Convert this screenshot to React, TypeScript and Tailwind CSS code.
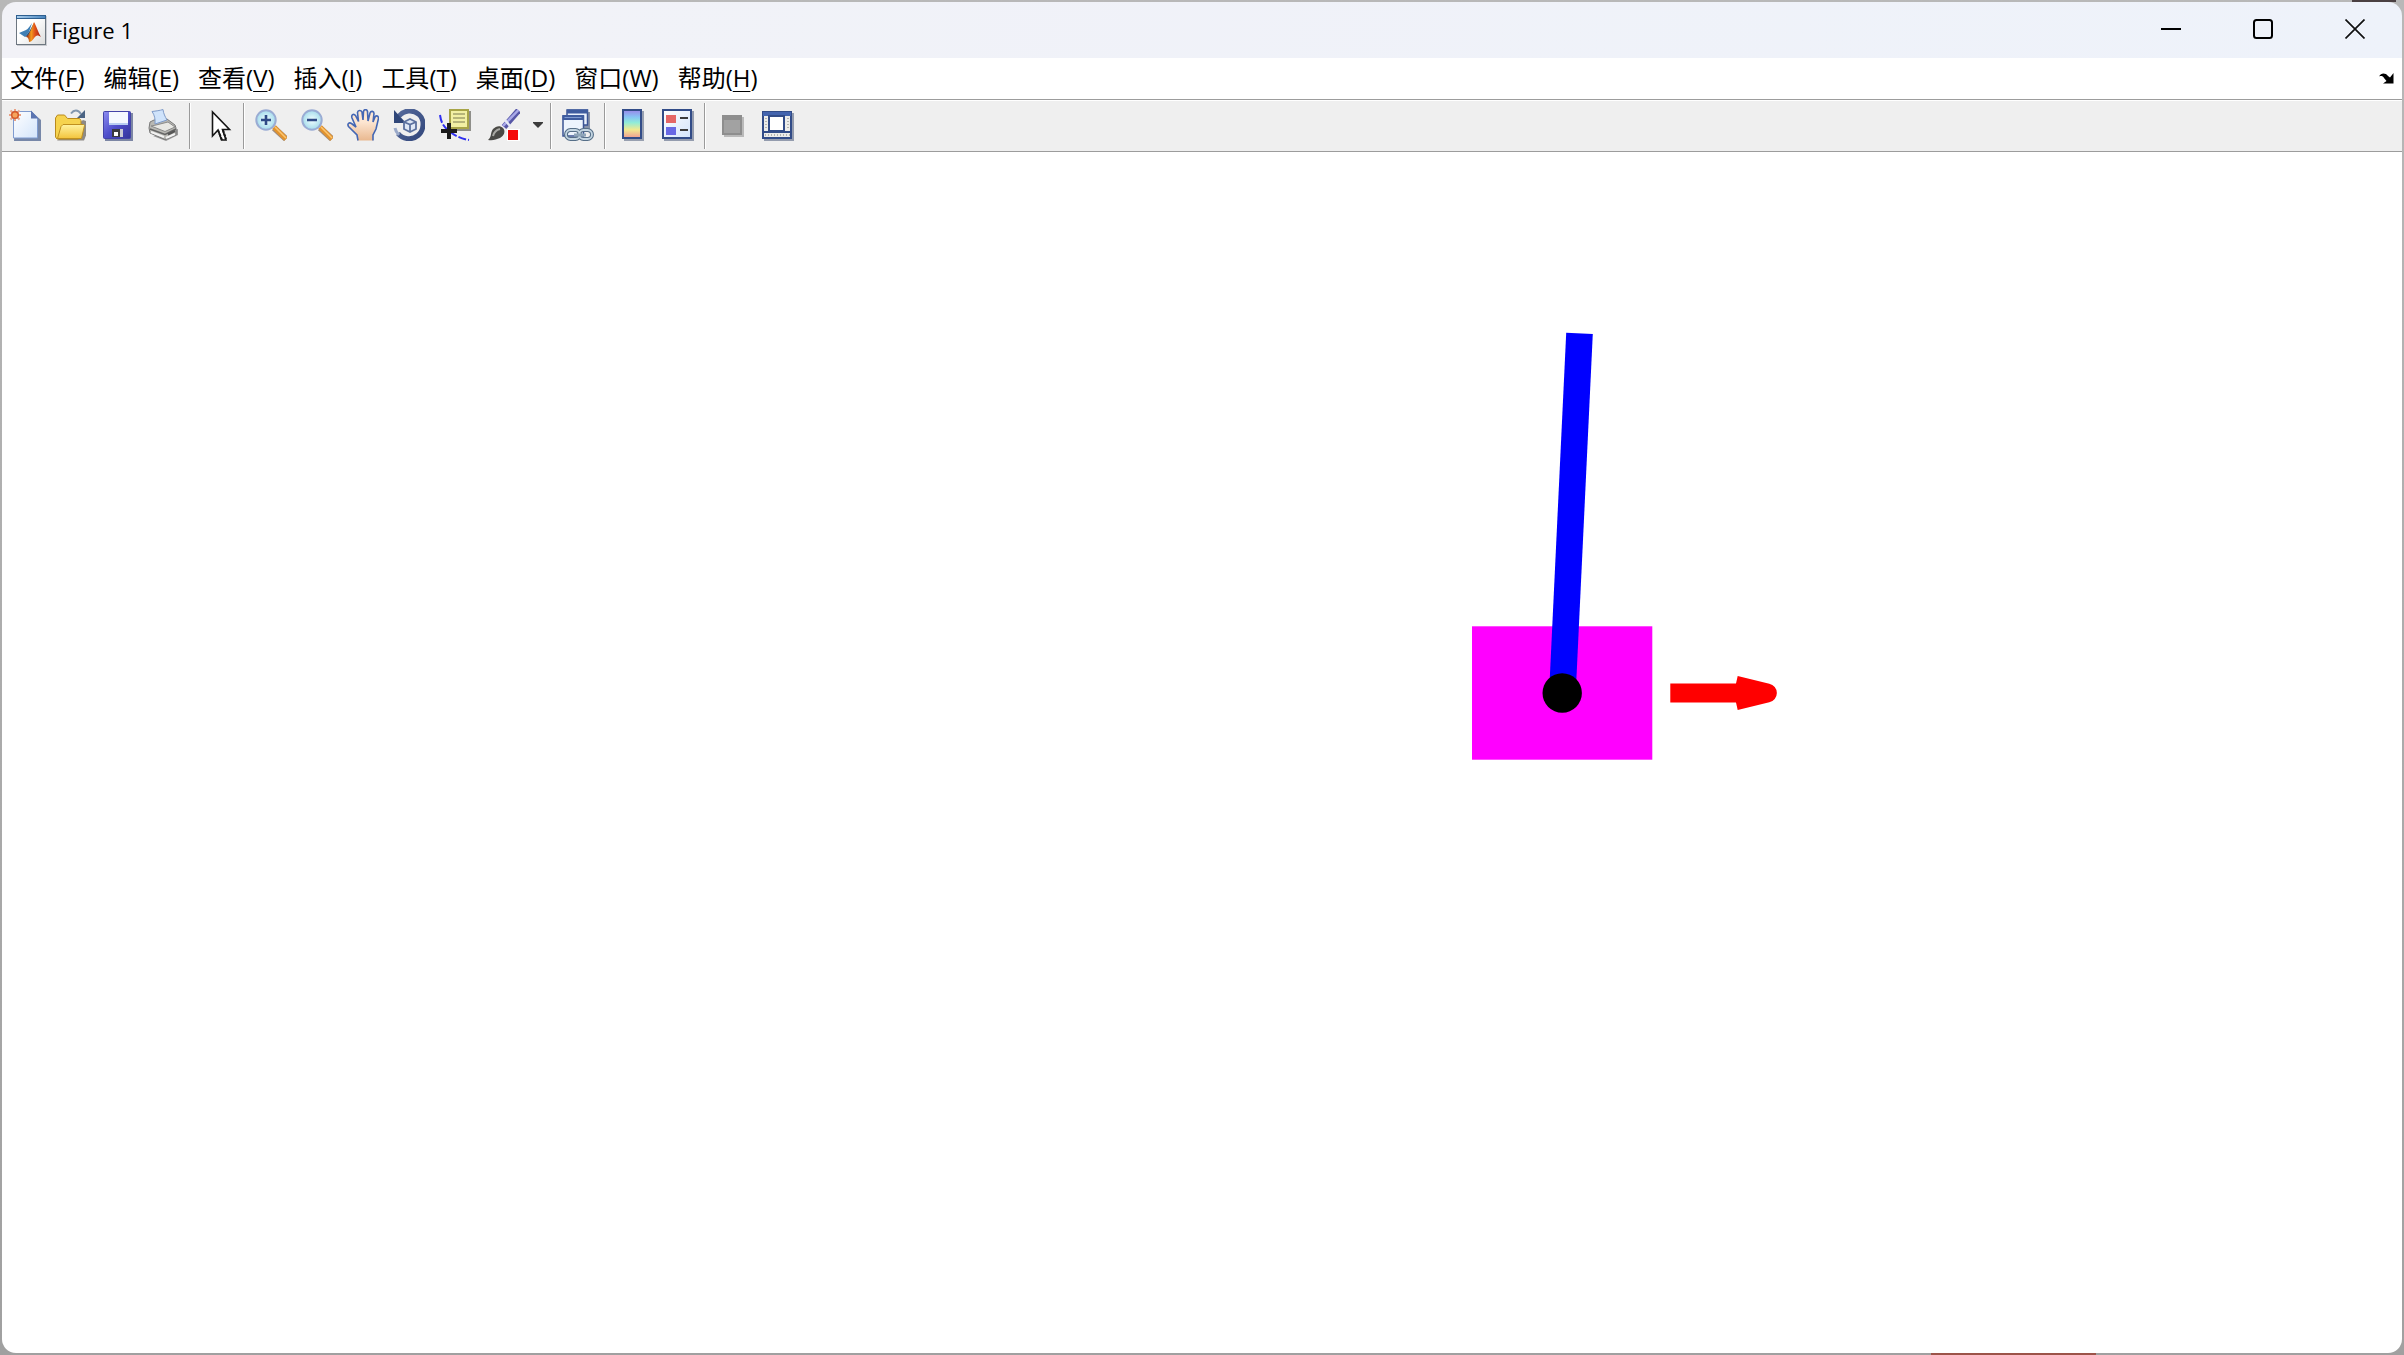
import type { ReactNode } from 'react'

const menus = [
  { label: '文件', hotkey: 'F' },
  { label: '编辑', hotkey: 'E' },
  { label: '查看', hotkey: 'V' },
  { label: '插入', hotkey: 'I' },
  { label: '工具', hotkey: 'T' },
  { label: '桌面', hotkey: 'D' },
  { label: '窗口', hotkey: 'W' },
  { label: '帮助', hotkey: 'H' },
]

function Icon({ children }: { children: ReactNode }) {
  return (
    <svg className="size-8" viewBox="0 0 32 32" fill="none" aria-hidden="true">
      {children}
    </svg>
  )
}

function ToolButton({ label, children }: { label: string; children: ReactNode }) {
  return (
    <button type="button" aria-label={label} className="flex h-full w-[46px] items-center justify-center pb-px">
      <Icon>{children}</Icon>
    </button>
  )
}

function Separator() {
  return <div className="mx-[3px] h-[46px] w-0.5 border-l border-[#9a9a9a] bg-white" />
}

function MatlabLogo() {
  return (
    <svg className="size-[31px]" viewBox="0 0 31 31" aria-hidden="true">
      <defs>
        <linearGradient id="logoBar" x1="0" x2="1">
          <stop offset="0" stopColor="#a9cdec" />
          <stop offset="1" stopColor="#4a86bf" />
        </linearGradient>
        <linearGradient id="logoBg" x1="0" y1="0" x2="1" y2="1">
          <stop offset="0.4" stopColor="#ffffff" />
          <stop offset="1" stopColor="#dcdcdc" />
        </linearGradient>
        <linearGradient id="logoPeak" x1="0" x2="1">
          <stop offset="0" stopColor="#8c1a12" />
          <stop offset="0.35" stopColor="#f39a1e" />
          <stop offset="0.6" stopColor="#e0521c" />
          <stop offset="1" stopColor="#a31f14" />
        </linearGradient>
      </defs>
      <rect x="1" y="1" width="30" height="30" fill="#c9cbd0" />
      <rect x="0.5" y="0.5" width="29" height="29" fill="url(#logoBg)" stroke="#6d7680" />
      <rect x="0" y="0" width="30" height="4" fill="#2f5f8f" />
      <rect x="1" y="1" width="28" height="2" fill="url(#logoBar)" />
      <path d="M3 18l7-3c2-1 4-4 6-7l-3 9-4 5z" fill="#3f7fb5" />
      <path d="M9 22l4-5 5-9c-1 4-2 8-6 13z" fill="#24507c" />
      <path d="M10 22c4-3 5-8 8-15 2 3 4 10 7 15-3-2-4-2-6 0s-3 5-6 5c0-3-1-5-3-5z" fill="url(#logoPeak)" />
    </svg>
  )
}

function TitleBar() {
  return (
    <header className="flex h-14 items-center justify-between bg-gradient-to-r from-[#f2f2f7] to-[#eef2fa]">
      <div className="flex items-center gap-1 pl-3.5">
        <MatlabLogo />
        <h1 className="text-[22px] leading-8">Figure 1</h1>
      </div>
      <div className="flex h-full pr-px pb-0.5">
        <button type="button" aria-label="最小化" className="flex w-[92px] items-center justify-center">
          <svg className="size-5" viewBox="0 0 20 20">
            <path d="M0 10h20" stroke="#000" strokeWidth="2" />
          </svg>
        </button>
        <button type="button" aria-label="最大化" className="flex w-[92px] items-center justify-center">
          <svg className="size-5" viewBox="0 0 20 20">
            <rect x="1" y="1" width="18" height="18" rx="2.5" fill="none" stroke="#000" strokeWidth="2" />
          </svg>
        </button>
        <button type="button" aria-label="关闭" className="flex w-[92px] items-center justify-center">
          <svg className="size-5" viewBox="0 0 20 20">
            <path d="M0.5 0.5l19 19M19.5 0.5l-19 19" stroke="#111" strokeWidth="1.7" />
          </svg>
        </button>
      </div>
    </header>
  )
}

function MenuBar() {
  return (
    <nav className="flex h-[41px] items-center justify-between bg-white px-2">
      <div className="flex gap-[19px] pb-0.5">
        {menus.map((menu) => (
          <button key={menu.hotkey} type="button" className="text-2xl leading-8 whitespace-nowrap">
            {menu.label}(
            <span className="underline decoration-1 underline-offset-4">{menu.hotkey}</span>)
          </button>
        ))}
      </div>
      <button type="button" aria-label="停靠">
        <svg className="h-[11px] w-[15px]" viewBox="0 0 15 11">
          <path d="M0 3.5C2 0 6-0.5 9 3l2 1.5L14.5 0v10.5H4l3.5-2.5L5 5C4 3 2 2.500 0 3.500z" fill="#000" />
        </svg>
      </button>
    </nav>
  )
}

function Toolbar() {
  return (
    <div
      role="toolbar"
      className="flex h-[53px] items-center border-y border-[#9c9c9c] bg-[#efefef] shadow-[inset_0_1px_0_#ffffff]"
    >
      <svg className="absolute size-0" aria-hidden="true">
        <defs>
          <linearGradient id="page" x1="0" y1="0" x2="1" y2="1">
            <stop offset="0" stopColor="#ffffff" />
            <stop offset="1" stopColor="#d3e4fb" />
          </linearGradient>
          <linearGradient id="folder" x1="0" y1="0" x2="0" y2="1">
            <stop offset="0" stopColor="#fff3a0" />
            <stop offset="1" stopColor="#f3c43c" />
          </linearGradient>
          <linearGradient id="disk" x1="0" y1="0" x2="1" y2="1">
            <stop offset="0" stopColor="#8d8df0" />
            <stop offset="0.5" stopColor="#4f4fcb" />
            <stop offset="1" stopColor="#34349a" />
          </linearGradient>
          <radialGradient id="lens">
            <stop offset="0" stopColor="#f2ffff" />
            <stop offset="1" stopColor="#a5dcec" />
          </radialGradient>
          <linearGradient id="skin" x1="0" y1="0" x2="0" y2="1">
            <stop offset="0.4" stopColor="#fde6d2" />
            <stop offset="1" stopColor="#e9b88f" />
          </linearGradient>
          <linearGradient id="spectrum" x1="0" y1="0" x2="0" y2="1">
            <stop offset="0" stopColor="#9a86e8" />
            <stop offset="0.25" stopColor="#86c4f4" />
            <stop offset="0.45" stopColor="#90ecd8" />
            <stop offset="0.7" stopColor="#f1ea90" />
            <stop offset="1" stopColor="#f09a92" />
          </linearGradient>
          <linearGradient id="ring" x1="0" y1="0" x2="1" y2="1">
            <stop offset="0" stopColor="#55699a" />
            <stop offset="1" stopColor="#33487c" />
          </linearGradient>
        </defs>
      </svg>

      <ToolButton label="新建图窗">
        <path d="M6 4h18l8 7v21H5z" fill="#7787a8" />
        <path d="M4.5 2.5h18l6 6v20.5h-24z" fill="url(#page)" stroke="#7f9bd0" />
        <path d="M22 1.5v8h7.5z" fill="#5b74b0" />
        <path d="M6 0v12M0 6h12M1.5 1.5l9 9M10.5 1.5l-9 9" stroke="#e9a184" strokeWidth="2" />
        <circle cx="6" cy="6" r="3.3" fill="#f6a45c" stroke="#d4582a" strokeWidth="1.5" />
      </ToolButton>
      <ToolButton label="打开文件">
        <path d="M2 31.5h27l2-5V12l-3-1z" fill="#8d8a86" />
        <path d="M0.5 9l2-3h7l3 3.5h12l1.5 2V28l-3 2H2l-1.5-2z" fill="#f6d34e" stroke="#b98a1e" />
        <path d="M6 17.5l2-2h20.5l1 1-3 13H2.5z" fill="url(#folder)" stroke="#c0901e" />
        <path d="M16 4.5c3-4 7-4 10 .5" stroke="#8297b0" strokeWidth="2" />
        <path d="M30 1v8h-8z" fill="#4b6484" />
      </ToolButton>
      <ToolButton label="保存图窗">
        <rect x="4" y="4" width="28" height="28" fill="#7c86a4" />
        <rect x="2.5" y="2.5" width="27" height="27" rx="1" fill="url(#disk)" stroke="#4343a8" />
        <rect x="8" y="3" width="19" height="12" fill="#f4f8ff" />
        <path d="M8 15h19" stroke="#b9cdf2" strokeWidth="2" />
        <rect x="11" y="20" width="11" height="8" fill="#3a3a40" />
        <rect x="13" y="23" width="4" height="4" fill="#ffffff" />
        <rect x="19" y="20" width="3" height="8" fill="#c9c9d4" />
      </ToolButton>
      <ToolButton label="打印图窗">
        <path d="M6 27l13 5 12-6v-6z" fill="#9a9a9a" />
        <path d="M3 13l4-2 13-1 8 6 1 3v7l-11 4.5L3 24l-1-5z" fill="#b8b8b3" stroke="#787878" />
        <path d="M5 2.5C9 2 13 1.5 16 .5c.5 4 2 7 4 10.500L8 15C8.500 10 7.500 6 5 2.500z" fill="#cfe3fb" stroke="#7f9bc8" />
        <path d="M4 17l14 5.500L28 18l-7-5-12 3z" fill="#e8e8e4" stroke="#8a8a8a" />
        <path d="M3 20l15 5.500L29 20" stroke="#666" strokeWidth="1.500" />
        <path d="M4 23l13 5M19 29l9-4" stroke="#f2f2f2" strokeWidth="2" />
        <path d="M21 25.500l7-3.500" stroke="#555" strokeWidth="2" />
      </ToolButton>

      <Separator />

      <ToolButton label="编辑绘图">
        <path
          d="M11.5 3v24l5.5-6 3.5 10h4.5L21.5 20.500h7z"
          fill="#ffffff"
          stroke="#161616"
          strokeWidth="1.6"
        />
        <path d="M17 21l4 10M22 21l3 9" stroke="#161616" strokeWidth="2" strokeDasharray="3 1" />
      </ToolButton>

      <Separator />

      <ToolButton label="放大">
        <path d="M19 19l12 11" stroke="#9c8c80" strokeWidth="6" />
        <path d="M19 18l12 12" stroke="#e2932e" strokeWidth="5" />
        <path d="M20 18l11 11" stroke="#fbc672" strokeWidth="1.5" />
        <circle cx="11" cy="11" r="9.7" fill="url(#lens)" stroke="#9aacd4" strokeWidth="2" />
        <path d="M11 6v10M6 11h10" stroke="#2f4a86" strokeWidth="2.6" />
      </ToolButton>
      <ToolButton label="缩小">
        <path d="M19 19l12 11" stroke="#9c8c80" strokeWidth="6" />
        <path d="M19 18l12 12" stroke="#e2932e" strokeWidth="5" />
        <path d="M20 18l11 11" stroke="#fbc672" strokeWidth="1.5" />
        <circle cx="11" cy="11" r="9.7" fill="url(#lens)" stroke="#9aacd4" strokeWidth="2" />
        <path d="M6 11h10" stroke="#2f4a86" strokeWidth="2.6" />
      </ToolButton>
      <ToolButton label="平移">
        <path
          d="M11 31.500L10 26 1.500 17.500C0 15 2 13 4.500 14.500L9 18 5 9C4 6 6.500 4 8.500 6.500l3 6L10.500 3.500C11 1 14 1 15 3l1 8L16.500 2.500C17 0 20 0 20.500 2.500L21 12l2-8c1-2.500 4-2 4 .5L26 13l2-5c1.500-2 3.500-1 3.500 1.500L29 20l-3 6v5.500z"
          fill="url(#skin)"
        />
        <path
          d="M11 31.500L10 26 1.500 17.500C0 15 2 13 4.500 14.500L9 18 5 9C4 6 6.500 4 8.500 6.500l3 6L10.500 3.500C11 1 14 1 15 3l1 8L16.500 2.500C17 0 20 0 20.500 2.500L21 12l2-8c1-2.500 4-2 4 .5L26 13l2-5c1.500-2 3.500-1 3.500 1.500L29 20l-3 6v5.500"
          stroke="#4467b4"
          strokeWidth="1.6"
        />
      </ToolButton>
      <ToolButton label="三维旋转">
        <path d="M6 7C11 1 20 0 26 5.500s5 16-1 21-15 4-20-2" stroke="url(#ring)" strokeWidth="5" />
        <path d="M2 19c.5 3 2 5 4 7" stroke="#9aa9c9" strokeWidth="3" />
        <path d="M1 1v13h12z" fill="#2f4678" />
        <path d="M11 13l6-3 6 3v7l-6 3-6-3z" fill="#dfe8f6" stroke="#5b719f" strokeWidth="1.8" />
        <path d="M11 13l6 2.500 6-2.500M17 15.500V23" stroke="#5b719f" strokeWidth="1.8" />
      </ToolButton>
      <ToolButton label="数据提示">
        <rect x="12" y="2" width="20" height="20" fill="#8f8f8a" />
        <rect x="11" y="1" width="18" height="18" fill="#f2f0a4" stroke="#a8a548" strokeWidth="2" />
        <path d="M14 5h12M14 9h12M14 13h12" stroke="#a3a16c" strokeWidth="1.5" />
        <path d="M1 6c1 7 3 11 9 16 6 5 13 8 20 9" stroke="#2f2ff0" strokeWidth="2" strokeDasharray="8 2" />
        <path d="M10 14v16M2 22h16" stroke="#1c1c1c" strokeWidth="4" />
      </ToolButton>

      <div className="flex h-full w-[69px] items-center pb-px pl-2.5">
        <button type="button" aria-label="刷选数据">
          <Icon>
            <path d="M30.500 1.500L16 18" stroke="#5656a6" strokeWidth="6" />
            <path d="M30.500 1L15 17" stroke="#a8a8e8" strokeWidth="2.5" />
            <path d="M17 11l5 6" stroke="#e4e8f4" strokeWidth="2.5" />
            <path d="M0 31c4-3 2-7 5-11 3-3 7-4 10-1s1 8-3 10c-4 1.500-7 3-12 2z" fill="#4a4a46" />
            <path d="M5 27c1-4 3-6 7-7" stroke="#a9a9a4" strokeWidth="2" />
            <rect x="19" y="20" width="13" height="12" fill="#ffffff" />
            <rect x="20" y="21" width="10" height="10" fill="#f50a0a" />
          </Icon>
        </button>
        <button type="button" aria-label="刷选选项" className="flex h-full flex-1 items-center justify-end pr-1">
          <svg className="h-1.5 w-2.5" viewBox="0 0 10 6">
            <path d="M0 0h10v1L5 6 0 1z" fill="#3c3c3c" />
          </svg>
        </button>
      </div>

      <Separator />

      <ToolButton label="链接绘图">
        <rect x="7" y="3" width="21" height="18" fill="#8792a8" />
        <rect x="5" y="1" width="20.5" height="15" fill="#eaf1fc" stroke="#3b5494" strokeWidth="1.5" />
        <rect x="5" y="0.5" width="21" height="4" fill="#3f5c9f" />
        <rect x="1" y="7" width="20.5" height="20" fill="#edf4fd" stroke="#3b5494" strokeWidth="1.5" />
        <rect x="0.5" y="6" width="21.5" height="5" fill="#3f5c9f" />
        <path d="M2.5 8.5h17" stroke="#7f9ad0" />
        <rect x="4" y="21" width="14" height="9" rx="4.5" stroke="#566f88" strokeWidth="4" />
        <rect x="17" y="21" width="13" height="9" rx="4.5" stroke="#566f88" strokeWidth="4" />
        <rect x="4" y="21" width="14" height="9" rx="4.5" stroke="#c4d6e2" strokeWidth="1.8" />
        <rect x="17" y="21" width="13" height="9" rx="4.5" stroke="#c4d6e2" strokeWidth="1.8" />
        <path d="M12 26h12" stroke="#8ea5b8" strokeWidth="3" />
      </ToolButton>

      <Separator />

      <ToolButton label="插入颜色栏">
        <rect x="8" y="2" width="20" height="30" fill="#98a0b0" />
        <rect x="7" y="1" width="18" height="28" fill="url(#spectrum)" stroke="#324c88" strokeWidth="2" />
      </ToolButton>
      <ToolButton label="插入图例">
        <rect x="2" y="2" width="30" height="30" fill="#949cae" />
        <rect x="1" y="1" width="28" height="28" fill="url(#page)" stroke="#324c88" strokeWidth="2" />
        <rect x="4" y="6" width="10" height="8" fill="#e46666" />
        <rect x="4" y="18" width="10" height="8" fill="#6868e4" />
        <path d="M18 9h8M18 21h8" stroke="#3c3c3c" strokeWidth="2" />
      </ToolButton>

      <Separator />

      <ToolButton label="隐藏绘图工具">
        <rect x="8" y="8" width="20" height="20" fill="#bababa" />
        <rect x="6" y="6" width="20" height="20" fill="#8e8e8e" />
        <rect x="8" y="11" width="16" height="13" fill="#a2a2a2" />
      </ToolButton>
      <ToolButton label="显示绘图工具">
        <rect x="2" y="4" width="30" height="28" fill="#949cae" />
        <rect x="1" y="3" width="28" height="26" fill="#ececea" stroke="#324c88" strokeWidth="2" />
        <rect x="1" y="3" width="28" height="4" fill="#4364ae" />
        <rect x="7" y="7" width="15" height="15" fill="#ffffff" stroke="#324c88" strokeWidth="2" />
        <path d="M1 23h28" stroke="#324c88" strokeWidth="2" />
        <path d="M3 26h25M4 9v12M26 9v12" stroke="#b4b4b0" strokeWidth="2" strokeDasharray="1 2" />
      </ToolButton>
    </div>
  )
}

// Cart, pole, pivot and the force arrow
function PendulumPlot() {
  return (
    <main className="flex flex-1 bg-white">
      <svg className="h-auto w-full" viewBox="0 0 2400 1201" role="img" aria-label="Figure 1">
        <rect x="1470" y="474.3" width="180.3" height="133.4" fill="#ff00ff" />
        <path d="M1577.5 181.4L1560.4 541" stroke="#0000ff" strokeWidth="26.6" />
        <circle cx="1560.2" cy="541" r="19.7" fill="#000000" />
        <path
          d="M1668.3 531.5H1734L1735.7 524L1767.3 531.7A9.5 9.5 0 0 1 1767.3 550.3L1735.7 558L1734 550.5H1668.3Z"
          fill="#ff0000"
        />
      </svg>
    </main>
  )
}

export default function App() {
  return (
    <div className="relative flex min-h-screen flex-col bg-[#b4b4b4] bg-gradient-to-b from-[#b8b8b8] to-[#a0a0a0] p-0.5 font-['Open_Sans','Noto_Sans_CJK_SC',sans-serif] text-black">
      <div className="absolute right-[308px] bottom-0 h-0.5 w-[165px] bg-[#9c5449]" />
      <div className="absolute top-0 right-2 h-0.5 w-11 bg-[#4a4042]" />
      <div className="flex flex-1 flex-col overflow-hidden rounded-[14px]">
        <TitleBar />
        <MenuBar />
        <Toolbar />
        <PendulumPlot />
      </div>
    </div>
  )
}
